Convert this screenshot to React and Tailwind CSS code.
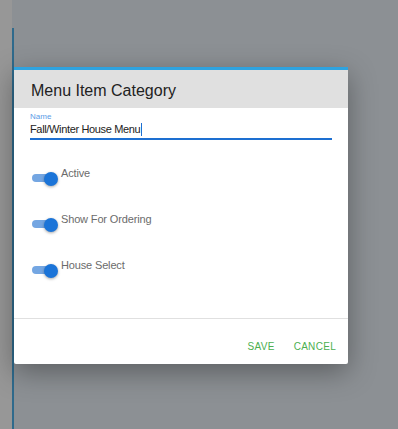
import React from "react";

const Toggle = ({ label }) => (
  <div className="flex items-start h-[14px]">
    <div className="relative w-[26px] h-[14px] flex items-center">
      <div className="w-[24px] h-[8px] rounded-full bg-[#74a6e2]" />
      <div className="absolute right-0 top-[1px] w-[14px] h-[14px] rounded-full bg-[#1b74d8] shadow-[0_1px_3px_rgba(0,0,0,0.35)]" />
    </div>
    <span className="ml-[3px] -mt-[5px] text-[11px] tracking-[-0.15px] text-[#6b6b6b] leading-[14px]">{label}</span>
  </div>
);

const App = () => {
  return (
    <div
      className="flex w-[398px] h-[429px] bg-[#8c9094] overflow-hidden"
      style={{ fontFamily: '"Liberation Sans", Arial, sans-serif' }}
    >
      <div className="w-[12px] h-full bg-[#979797]" />
      <div className="w-[2px] h-full flex flex-col">
        <div className="h-[28px] bg-[#8c9094]" />
        <div className="flex-1 bg-[#2f6a8c]" />
      </div>

      <div className="mt-[67px] w-[334px] h-[297px] bg-white border-t-[3px] border-[#2ea3e0] shadow-[0_8px_28px_rgba(0,0,0,0.35)] rounded-b-[2px] flex flex-col">
        <div className="h-[38px] bg-[#e0e0e0] px-[17px] flex items-center">
          <h2 className="text-[16px] text-[#222] pt-[3px]">Menu Item Category</h2>
        </div>

        <div className="px-[16px] pt-[4px]">
          <div className="text-[8px] text-[#5b9be6] leading-[9px]">Name</div>
          <div className="flex items-center text-[11px] tracking-[-0.35px] text-[#222] border-b-2 border-[#1d6fd1] pb-[2px] mt-[1px] h-[18px]">
            <span>Fall/Winter House Menu</span>
            <span className="ml-px w-px h-[13px] bg-[#1d6fd1]" />
          </div>
        </div>

        <div className="px-[18px] pt-[31px] flex flex-col gap-[32px]">
          <Toggle label="Active" />
          <Toggle label="Show For Ordering" />
          <Toggle label="House Select" />
        </div>

        <div className="flex-1" />
        <div className="h-px bg-[#e0e0e0]" />
        <div className="h-[45px] flex items-center justify-end gap-[19px] pr-[12px] pt-[10px]">
          <button className="text-[10px] tracking-[0.3px] text-[#4caf50]">SAVE</button>
          <button className="text-[10px] tracking-[0.3px] text-[#4caf50]">CANCEL</button>
        </div>
      </div>
    </div>
  );
};

export default App;
